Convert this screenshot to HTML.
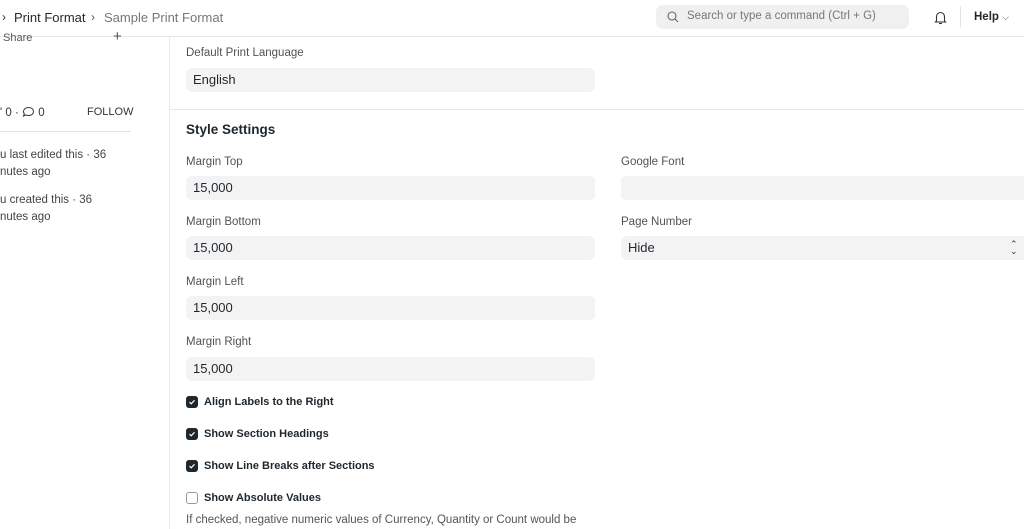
<!DOCTYPE html>
<html><head><style>
*{box-sizing:border-box;margin:0;padding:0}
body{width:1024px;height:529px;overflow:hidden;background:#fff;font-family:"Liberation Sans",sans-serif;color:#1f272e;position:relative}
.a{position:absolute;white-space:nowrap}
.lbl{font-size:11.5px;color:#525252}
.inp{position:absolute;height:24px;background:#f3f3f3;border-radius:6px;font-size:13px;padding:0 7px;line-height:24px;color:#1f272e}
.cb{position:absolute;left:186px;width:12px;height:12px;border-radius:3px;background:#1f272e}
.cb svg{position:absolute;left:2px;top:2px}
.ct{position:absolute;left:204px;font-size:11px;font-weight:bold;color:#1f272e}
</style></head><body>
<div class="a" style="left:0;top:0;width:1024px;height:37px;border-bottom:1px solid #e8e8e8"></div>
<div class="a" style="left:2px;top:10px;font-size:12px;color:#333">›</div>
<div class="a" style="left:14px;top:10px;font-size:13px;color:#1f272e">Print Format</div>
<div class="a" style="left:91px;top:10px;font-size:12px;color:#555">›</div>
<div class="a" style="left:104px;top:10px;font-size:13px;color:#777">Sample Print Format</div>
<div class="a" style="left:656px;top:5px;width:253px;height:24px;background:#f0f0f0;border-radius:7px"></div>
<svg class="a" style="left:667px;top:11px" width="12" height="12" viewBox="0 0 12 12"><circle cx="5" cy="5" r="4" fill="none" stroke="#666" stroke-width="1.1"/><path d="M8 8l3 3" stroke="#666" stroke-width="1.1"/></svg>
<div class="a" style="left:687px;top:10px;font-size:11.5px;color:#777">Search or type a command (Ctrl + G)</div>
<svg class="a" style="left:934px;top:10px" width="13" height="15" viewBox="0 0 13 15"><path d="M2.5 11V6.5a4 4 0 018 0V11l1 1H1.5z" fill="none" stroke="#333" stroke-width="1.1"/><path d="M5 13.5h3" stroke="#333" stroke-width="1.1"/></svg>
<div class="a" style="left:960px;top:6px;width:1px;height:22px;background:#e5e5e5"></div>
<div class="a" style="left:974px;top:11px;font-size:11.5px;font-weight:bold;color:#1f272e">Help <span style="font-weight:normal;font-size:9px;color:#555">⌵</span></div>

<div class="a" style="left:169px;top:37px;width:1px;height:492px;background:#e8e8e8"></div>
<div class="a" style="left:3px;top:32px;font-size:11px;color:#555">Share</div>
<div class="a" style="left:113px;top:28px;font-size:15px;color:#555">+</div>
<div class="a" style="left:0;top:106px;font-size:11.5px;color:#333">' 0 · <svg width="13" height="12" viewBox="0 0 13 12" style="vertical-align:-2px"><path d="M6.5 1.5c3 0 5 1.8 5 4s-2 4-5 4c-1 0-2-.2-2.7-.6L1.5 10l.8-2.2C1.8 7.2 1.5 6.4 1.5 5.5c0-2.2 2-4 5-4z" fill="none" stroke="#333" stroke-width="1"/></svg> 0</div>
<div class="a" style="left:87px;top:106px;font-size:11px;color:#333">FOLLOW</div>
<div class="a" style="left:0;top:131px;width:131px;height:1px;background:#e2e2e2"></div>
<div class="a" style="left:0;top:147px;font-size:11.5px;color:#444;line-height:17px">u last edited this · 36<br>nutes ago</div>
<div class="a" style="left:0;top:192px;font-size:11.5px;color:#444;line-height:17px">u created this · 36<br>nutes ago</div>

<div class="a lbl" style="left:186px;top:47px">Default Print Language</div>
<div class="inp" style="left:186px;top:68px;width:409px">English</div>
<div class="a" style="left:170px;top:109px;width:854px;height:1px;background:#e8e8e8"></div>
<div class="a" style="left:186px;top:122px;font-size:13.5px;font-weight:bold">Style Settings</div>

<div class="a lbl" style="left:186px;top:156px">Margin Top</div>
<div class="inp" style="left:186px;top:176px;width:409px">15,000</div>
<div class="a lbl" style="left:186px;top:216px">Margin Bottom</div>
<div class="inp" style="left:186px;top:236px;width:409px">15,000</div>
<div class="a lbl" style="left:186px;top:276px">Margin Left</div>
<div class="inp" style="left:186px;top:296px;width:409px">15,000</div>
<div class="a lbl" style="left:186px;top:336px">Margin Right</div>
<div class="inp" style="left:186px;top:357px;width:409px">15,000</div>

<div class="a lbl" style="left:621px;top:156px">Google Font</div>
<div class="inp" style="left:621px;top:176px;width:410px"></div>
<div class="a lbl" style="left:621px;top:216px">Page Number</div>
<div class="inp" style="left:621px;top:236px;width:410px">Hide</div>
<div class="a" style="left:1010px;top:241px;font-size:9px;color:#333;line-height:7px">⌃<br>⌄</div>

<div class="cb" style="top:396px"><svg width="8" height="8" viewBox="0 0 8 8"><path d="M1.5 4.2l1.7 1.6 3.3-3.5" fill="none" stroke="#fff" stroke-width="1.2"/></svg></div>
<div class="ct" style="top:396px">Align Labels to the Right</div>
<div class="cb" style="top:428px"><svg width="8" height="8" viewBox="0 0 8 8"><path d="M1.5 4.2l1.7 1.6 3.3-3.5" fill="none" stroke="#fff" stroke-width="1.2"/></svg></div>
<div class="ct" style="top:428px">Show Section Headings</div>
<div class="cb" style="top:460px"><svg width="8" height="8" viewBox="0 0 8 8"><path d="M1.5 4.2l1.7 1.6 3.3-3.5" fill="none" stroke="#fff" stroke-width="1.2"/></svg></div>
<div class="ct" style="top:460px">Show Line Breaks after Sections</div>
<div class="cb" style="top:492px;background:#fff;border:1px solid #999"></div>
<div class="ct" style="top:492px">Show Absolute Values</div>
<div class="a" style="left:186px;top:514px;font-size:11.5px;color:#555">If checked, negative numeric values of Currency, Quantity or Count would be</div>
</body></html>
